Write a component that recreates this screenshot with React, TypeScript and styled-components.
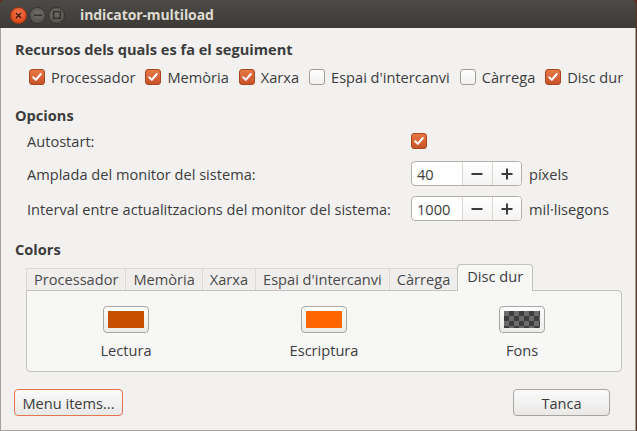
import React from 'react';
import styled, { createGlobalStyle } from 'styled-components';

const GlobalStyle = createGlobalStyle`
  html, body {
    margin: 0;
    padding: 0;
    background: #5a3122;
  }
  body {
    font-family: "Open Sans", "Noto Sans", sans-serif;
    color: #3c3c3c;
  }
`;

const Window = styled.div`
  width: 636px;
  height: 431px;
  display: flex;
  flex-direction: column;
  border-radius: 5px 5px 0 0;
  overflow: hidden;
`;

const TitleBar = styled.div`
  height: 28px;
  flex: none;
  display: flex;
  align-items: center;
  padding-left: 10px;
  background: linear-gradient(#4b4a46, #3c3b37);
  box-sizing: border-box;
`;

const WinButton = styled.span<{ $close?: boolean }>`
  width: 17px;
  height: 17px;
  margin-right: 2px;
  margin-top: 2px;
  border-radius: 50%;
  box-sizing: border-box;
  display: flex;
  align-items: center;
  justify-content: center;
  border: 1px solid ${(p) => (p.$close ? '#9e3512' : '#34332f')};
  background: ${(p) =>
    p.$close
      ? 'radial-gradient(circle at 50% 35%, #f27a52, #df4a1c 70%)'
      : 'radial-gradient(circle at 50% 35%, #6d6c67, #55544f 70%)'};
`;

const Title = styled.span`
  margin-left: 13px;
  font-size: 14px;
  font-weight: 700;
  color: #dfdbd2;
  letter-spacing: -0.1px;
`;

const Body = styled.div`
  flex: 1;
  display: flex;
  flex-direction: column;
  background: #f2f1f0;
  border: 1px solid #a6a39e;
  border-top: none;
  padding: 12px 0 0 14px;
  font-size: 14.6px;
`;

const Heading = styled.div<{ $gap?: number }>`
  font-weight: 700;
  line-height: 18px;
  margin-top: ${(p) => p.$gap ?? 0}px;
`;

const CheckRow = styled.div`
  display: flex;
  align-items: center;
  gap: 10px;
  margin: 11px 0 0 14px;
  height: 16px;
`;

const CheckItem = styled.label`
  display: flex;
  align-items: center;
  gap: 6px;
  line-height: 16px;
  white-space: nowrap;
`;

const Box = styled.span<{ $on: boolean }>`
  width: 16px;
  height: 16px;
  flex: none;
  box-sizing: border-box;
  border-radius: 3px;
  display: flex;
  align-items: center;
  justify-content: center;
  border: 1px solid ${(p) => (p.$on ? '#a8461e' : '#a09d98')};
  background: ${(p) =>
    p.$on ? 'linear-gradient(#e77745, #c8522a)' : 'linear-gradient(#ffffff, #f1f0ef)'};
`;

const Check = ({ on }: { on: boolean }) => (
  <Box $on={on}>
    {on && (
      <svg width="12" height="12" viewBox="0 0 12 12">
        <path d="M2.2 6.3 L4.8 8.9 L9.8 3" fill="none" stroke="#fff" strokeWidth="2" strokeLinecap="round" strokeLinejoin="round" />
      </svg>
    )}
  </Box>
);

const OptionsGrid = styled.div`
  display: grid;
  grid-template-columns: 384px 111px auto;
  grid-template-rows: 20px 25px 25px;
  row-gap: 10px;
  align-items: center;
  margin: 7px 0 0 12px;
`;

const Unit = styled.span`
  margin-left: 7px;
`;

const Spin = styled.div`
  display: flex;
  height: 25px;
  box-sizing: border-box;
  border: 1px solid #b3afa9;
  border-radius: 4px;
  background: #fff;
  overflow: hidden;
`;

const SpinEntry = styled.span`
  width: 52px;
  padding-left: 5px;
  box-sizing: border-box;
  display: flex;
  align-items: center;
  border-right: 1px solid #dad7d3;
`;

const SpinButton = styled.span<{ $last?: boolean }>`
  width: 29px;
  display: flex;
  align-items: center;
  justify-content: center;
  background: linear-gradient(#ffffff, #f5f4f3);
  border-right: ${(p) => (p.$last ? 'none' : '1px solid #dad7d3')};
`;

const SpinBox = ({ value }: { value: string }) => (
  <Spin>
    <SpinEntry>{value}</SpinEntry>
    <SpinButton>
      <svg width="12" height="12" viewBox="0 0 12 12">
        <rect x="0.5" y="5" width="11" height="2" fill="#3c3c3c" />
      </svg>
    </SpinButton>
    <SpinButton $last>
      <svg width="12" height="12" viewBox="0 0 12 12">
        <rect x="0.5" y="5" width="11" height="2" fill="#3c3c3c" />
        <rect x="5" y="0.5" width="2" height="11" fill="#3c3c3c" />
      </svg>
    </SpinButton>
  </Spin>
);

const Notebook = styled.div`
  margin: 6px 0 0 11px;
  width: 596px;
  display: flex;
  flex-direction: column;
`;

const Tabs = styled.div`
  display: flex;
  align-items: flex-end;
  height: 26px;
`;

const Tab = styled.span<{ $active?: boolean }>`
  height: ${(p) => (p.$active ? 27 : 22)}px;
  box-sizing: border-box;
  padding: ${(p) => (p.$active ? '0 9px 5px' : '0 7px 1px')};
  display: flex;
  align-items: center;
  white-space: nowrap;
  margin-bottom: ${(p) => (p.$active ? -1 : 0)}px;
  position: relative;
  background: ${(p) => (p.$active ? '#f7f7f6' : '#efeeec')};
  color: ${(p) => (p.$active ? '#3c3c3c' : '#4a4a4a')};
  border: 1px solid ${(p) => (p.$active ? '#c4c1bc' : '#dcd9d5')};
  border-bottom: ${(p) => (p.$active ? 'none' : '0')};
  border-right: ${(p) => (p.$active ? '1px solid #c4c1bc' : 'none')};
  border-radius: ${(p) => (p.$active ? '4px 4px 0 0' : '0')};
`;

const Panel = styled.div`
  height: 82px;
  box-sizing: border-box;
  background: #f7f7f6;
  border: 1px solid #c4c1bc;
  border-radius: 0 4px 4px 4px;
  display: grid;
  grid-template-columns: repeat(3, 1fr);
  padding-top: 15px;
`;

const ColorCell = styled.div`
  display: flex;
  flex-direction: column;
  align-items: center;
  gap: 7px;
`;

const ColorButton = styled.span`
  width: 46px;
  height: 27px;
  box-sizing: border-box;
  padding: 4px 4px;
  border: 1px solid #aaa7a2;
  border-radius: 4px;
  background: linear-gradient(#fdfdfd, #ebeae9);
  display: flex;
`;

const Swatch = styled.span<{ $color?: string }>`
  flex: 1;
  background: ${(p) =>
    p.$color ?? 'repeating-conic-gradient(#3d3d3d 0 25%, #6b6b6b 0 50%) 0 0 / 10px 10px'};
`;

const Footer = styled.div`
  display: flex;
  justify-content: space-between;
  margin: 17px 25px 0 -1px;
`;

const Button = styled.span<{ $focus?: boolean; $w: number }>`
  width: ${(p) => p.$w}px;
  height: 27px;
  box-sizing: border-box;
  display: flex;
  align-items: center;
  justify-content: center;
  border-radius: 4px;
  border: 1px solid ${(p) => (p.$focus ? '#e0764c' : '#a8a5a0')};
  background: linear-gradient(#fbfbfb, #e9e8e7);
  color: #3c3c3c;
`;

const resources = [
  { name: 'Processador', on: true },
  { name: 'Memòria', on: true },
  { name: 'Xarxa', on: true },
  { name: "Espai d'intercanvi", on: false },
  { name: 'Càrrega', on: false },
  { name: 'Disc dur', on: true },
];

const tabs = ['Processador', 'Memòria', 'Xarxa', "Espai d'intercanvi", 'Càrrega', 'Disc dur'];

const colors = [
  { label: 'Lectura', color: '#c65000' },
  { label: 'Escriptura', color: '#ff6600' },
  { label: 'Fons' },
];

const App = (): JSX.Element => (
  <>
    <GlobalStyle />
    <Window>
      <TitleBar>
        <WinButton $close>
          <svg width="7" height="7" viewBox="0 0 7 7">
            <path d="M1 1 L6 6 M6 1 L1 6" stroke="#3a1a0e" strokeWidth="1.4" />
          </svg>
        </WinButton>
        <WinButton>
          <svg width="8" height="8" viewBox="0 0 8 8">
            <rect x="0" y="3.5" width="8" height="1.4" fill="#2f2e2a" />
          </svg>
        </WinButton>
        <WinButton>
          <svg width="8" height="8" viewBox="0 0 8 8">
            <rect x="0.7" y="0.7" width="6.6" height="6.6" fill="none" stroke="#2f2e2a" strokeWidth="1.3" />
          </svg>
        </WinButton>
        <Title>indicator-multiload</Title>
      </TitleBar>
      <Body>
        <Heading>Recursos dels quals es fa el seguiment</Heading>
        <CheckRow>
          {resources.map((r) => (
            <CheckItem key={r.name}>
              <Check on={r.on} />
              {r.name}
            </CheckItem>
          ))}
        </CheckRow>

        <Heading $gap={21}>Opcions</Heading>
        <OptionsGrid>
          <span>Autostart:</span>
          <Check on />
          <span />
          <span>Amplada del monitor del sistema:</span>
          <SpinBox value="40" />
          <Unit>píxels</Unit>
          <span>Interval entre actualitzacions del monitor del sistema:</span>
          <SpinBox value="1000" />
          <Unit>mil·lisegons</Unit>
        </OptionsGrid>

        <Heading $gap={19}>Colors</Heading>
        <Notebook>
          <Tabs>
            {tabs.map((t, i) => (
              <Tab key={t} $active={i === tabs.length - 1}>
                {t}
              </Tab>
            ))}
          </Tabs>
          <Panel>
            {colors.map((c) => (
              <ColorCell key={c.label}>
                <ColorButton>
                  <Swatch $color={c.color} />
                </ColorButton>
                <span>{c.label}</span>
              </ColorCell>
            ))}
          </Panel>
        </Notebook>

        <Footer>
          <Button $focus $w={109}>Menu items...</Button>
          <Button $w={97}>Tanca</Button>
        </Footer>
      </Body>
    </Window>
  </>
);

export default App;
